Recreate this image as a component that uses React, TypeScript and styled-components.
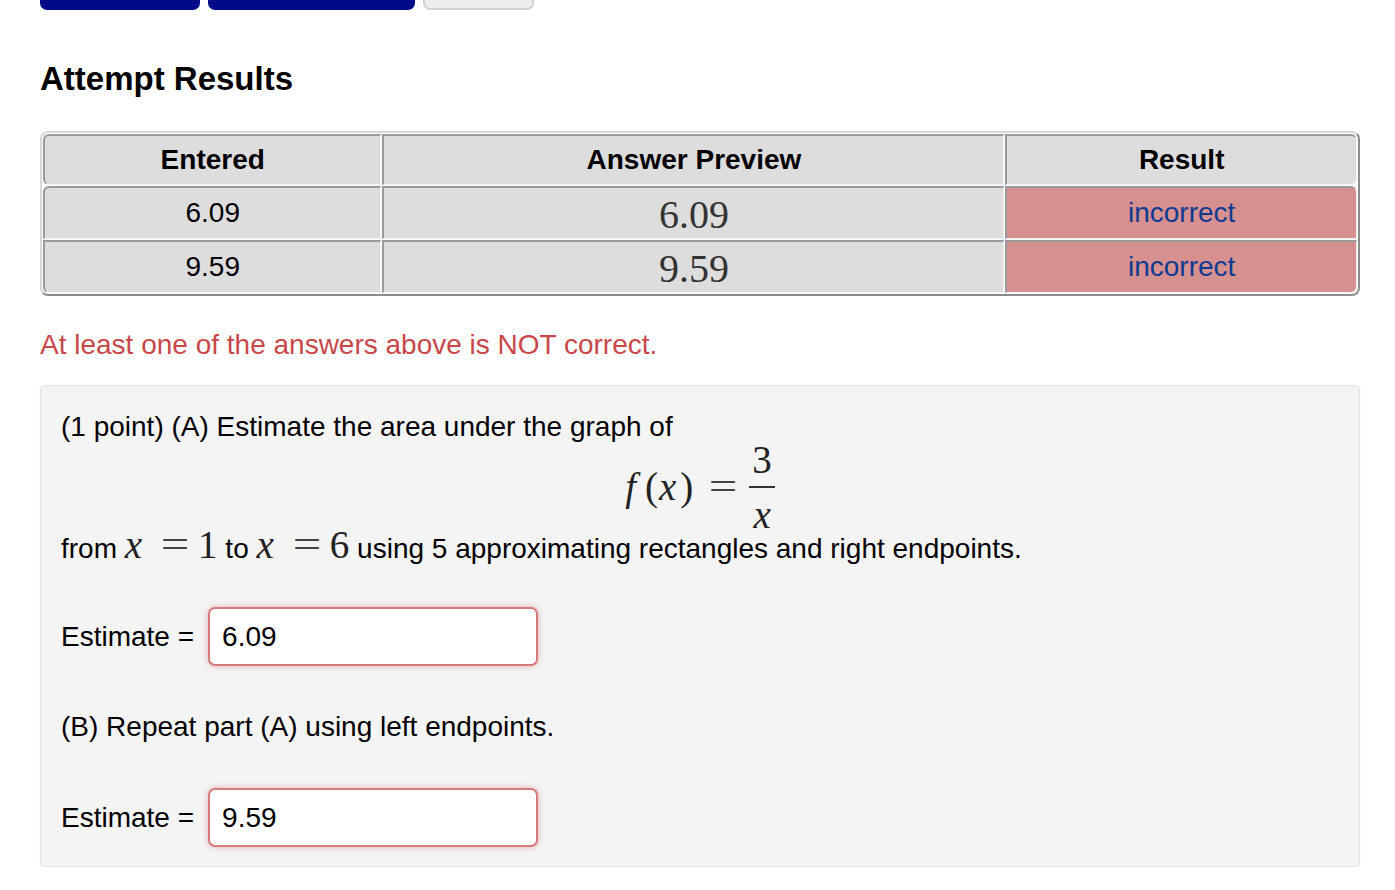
import styled, { createGlobalStyle } from "styled-components";

const GlobalStyle = createGlobalStyle`
    html, body {
        margin: 0;
        padding: 0;
        background: #ffffff;
    }
    body {
        font-family: "Liberation Sans", Helvetica, Arial, sans-serif;
        color: #000000;
    }
`;

const Page = styled.main`
    width: 1320px;
    padding: 0 35px 0 40px;
`;

const Toolbar = styled.div`
    display: flex;
    align-items: flex-end;
    gap: 8px;
    height: 10px;
    overflow: hidden;
`;

const NavButton = styled.button<{ $width: number; $light?: boolean }>`
    flex: none;
    width: ${props => props.$width}px;
    height: 40px;
    border-radius: 7px;
    border: ${props => (props.$light ? "2px solid #d2d2d2" : "none")};
    background: ${props => (props.$light ? "#eeeeee" : "#000b8a")};
`;

const Heading = styled.h3`
    margin: 50px 0 0;
    font-size: 33px;
    line-height: 38px;
    font-weight: 700;
`;

const ResultsTable = styled.table`
    margin-top: 33px;
    width: 100%;
    table-layout: fixed;
    border-collapse: separate;
    border-spacing: 1px;
    border-style: solid;
    border-width: 2px;
    border-color: #d8d8d8 #8c8c8c #8c8c8c #d8d8d8;
    border-radius: 8px;
    font-size: 28px;

    tr:first-child > :first-child { border-top-left-radius: 6px; }
    tr:first-child > :last-child { border-top-right-radius: 6px; }
    tr:last-child > :first-child { border-bottom-left-radius: 6px; }
    tr:last-child > :last-child { border-bottom-right-radius: 6px; }
`;

const HeadCell = styled.th`
    height: 48px;
    padding: 0;
    background: #dddddd;
    border-style: solid;
    border-width: 2px 1px 1px 2px;
    border-color: #9a9a9a #f2f2f2 #f2f2f2 #9a9a9a;
    font-weight: 700;
    text-align: center;
`;

const Cell = styled.td<{ $incorrect?: boolean }>`
    height: 50px;
    padding: 0;
    background: ${props => (props.$incorrect ? "#d69090" : "#dddddd")};
    color: ${props => (props.$incorrect ? "#0b3a91" : "#000000")};
    border-style: solid;
    border-width: 2px 1px 1px 2px;
    border-color: #9a9a9a #f2f2f2 #f2f2f2 #9a9a9a;
    text-align: center;
`;

const PreviewMath = styled.span`
    font-family: "Liberation Serif", "Times New Roman", serif;
    font-size: 40px;
    line-height: 40px;
    color: #333333;
    position: relative;
    top: 2px;
`;

const Warning = styled.p`
    margin: 33px 0 0;
    font-size: 28px;
    line-height: 32px;
    color: #c8484a;
`;

const ProblemBox = styled.section`
    margin-top: 24px;
    padding: 24px 20px 19px;
    background: #f4f4f4;
    border: 1px solid #e2e2e2;
    border-radius: 5px;
    box-shadow: 0 1px 2px rgba(0, 0, 0, 0.05);
    font-size: 28px;
`;

const Line = styled.div<{ $gap?: number }>`
    margin-top: ${props => props.$gap ?? 0}px;
    line-height: 34px;
`;

const DisplayMath = styled.div`
    display: flex;
    justify-content: center;
    align-items: center;
    height: 82px;
    padding-top: 2px;
    font-family: "Liberation Serif", "Times New Roman", serif;
    font-size: 39px;
    color: #222222;
`;

const MathVar = styled.i<{ $pad?: number }>`
    font-family: "Liberation Serif", "Times New Roman", serif;
    font-style: italic;
    font-size: 39px;
    line-height: 34px;
    color: #222222;
    padding-right: ${props => props.$pad ?? 3}px;
`;

const MathNum = styled.span<{ $pad?: number }>`
    font-family: "Liberation Serif", "Times New Roman", serif;
    font-size: 39px;
    line-height: 34px;
    color: #222222;
    padding: 0 ${props => props.$pad ?? 0}px;
`;

const MathOp = styled.span`
    display: inline-block;
    width: 30px;
    margin: 0 8px 0 15px;
    text-align: center;
    font-family: "Liberation Serif", "Times New Roman", serif;
    font-size: 39px;
    line-height: 34px;
    color: #444444;
    transform: scaleX(1.3);
`;

const Fraction = styled.span`
    display: inline-flex;
    flex-direction: column;
    align-items: center;
    margin-left: 3px;
`;

const FracPart = styled.span`
    line-height: 34px;
    padding: 0 3px;
`;

const FracBar = styled.span`
    align-self: stretch;
    height: 2px;
    background: #333333;
    margin: 9px 0 10px;
`;

const AnswerRow = styled.div<{ $gap: number }>`
    display: flex;
    align-items: center;
    margin-top: ${props => props.$gap}px;
`;

const AnswerLabel = styled.label`
    margin-right: 14px;
`;

const AnswerInput = styled.input`
    box-sizing: border-box;
    width: 330px;
    height: 59px;
    padding: 0 12px;
    border: 2px solid #d47a7a;
    border-radius: 7px;
    background: #ffffff;
    box-shadow: 0 0 6px rgba(210, 90, 90, 0.45);
    font-family: "Liberation Sans", Helvetica, Arial, sans-serif;
    font-size: 28px;
    color: #000000;
    outline: none;
`;

const attempts = [
    { entered: "6.09", result: "incorrect" },
    { entered: "9.59", result: "incorrect" },
];

function App() {
    return (
        <>
            <GlobalStyle />
            <Page>
                <Toolbar>
                    <NavButton $width={160} />
                    <NavButton $width={207} />
                    <NavButton $width={111} $light />
                </Toolbar>

                <Heading>Attempt Results</Heading>

                <ResultsTable>
                    <colgroup>
                        <col style={{ width: "25.8%" }} />
                        <col style={{ width: "47.4%" }} />
                        <col style={{ width: "26.8%" }} />
                    </colgroup>
                    <thead>
                        <tr>
                            <HeadCell>Entered</HeadCell>
                            <HeadCell>Answer Preview</HeadCell>
                            <HeadCell>Result</HeadCell>
                        </tr>
                    </thead>
                    <tbody>
                        {attempts.map(a => (
                            <tr key={a.entered}>
                                <Cell>{a.entered}</Cell>
                                <Cell><PreviewMath>{a.entered}</PreviewMath></Cell>
                                <Cell $incorrect>{a.result}</Cell>
                            </tr>
                        ))}
                    </tbody>
                </ResultsTable>

                <Warning>At least one of the answers above is NOT correct.</Warning>

                <ProblemBox>
                    <Line>(1 point) (A) Estimate the area under the graph of</Line>
                    <DisplayMath>
                        <MathVar $pad={8}>f</MathVar>
                        <MathNum $pad={1}>(</MathNum>
                        <MathVar $pad={4}>x</MathVar>
                        <MathNum>)</MathNum>
                        <MathOp>=</MathOp>
                        <Fraction>
                            <FracPart>3</FracPart>
                            <FracBar />
                            <FracPart><MathVar $pad={0}>x</MathVar></FracPart>
                        </Fraction>
                    </DisplayMath>
                    <Line>
                        from <MathVar>x</MathVar><MathOp>=</MathOp><MathNum>1</MathNum> to{" "}
                        <MathVar>x</MathVar><MathOp>=</MathOp><MathNum>6</MathNum> using 5 approximating
                        rectangles and right endpoints.
                    </Line>

                    <AnswerRow $gap={41}>
                        <AnswerLabel>Estimate =</AnswerLabel>
                        <AnswerInput defaultValue="6.09" />
                    </AnswerRow>

                    <Line $gap={44}>(B) Repeat part (A) using left endpoints.</Line>

                    <AnswerRow $gap={44}>
                        <AnswerLabel>Estimate =</AnswerLabel>
                        <AnswerInput defaultValue="9.59" />
                    </AnswerRow>
                </ProblemBox>
            </Page>
        </>
    );
}

export default App;
